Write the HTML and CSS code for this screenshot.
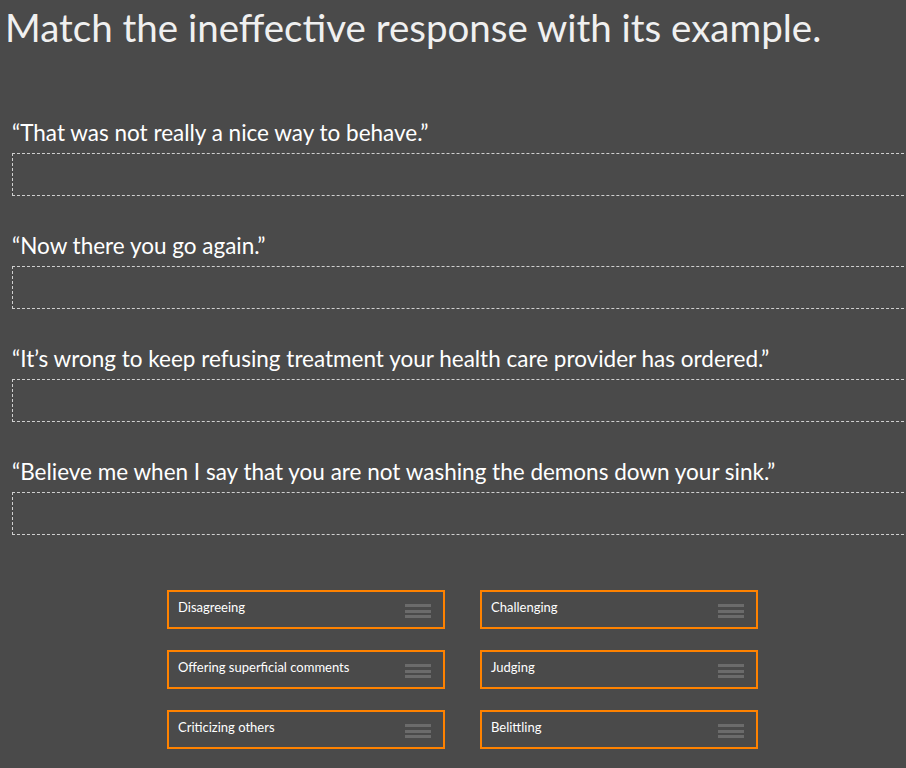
FILE: index.html
```html
<!DOCTYPE html>
<html lang="en">
<head>
<meta charset="utf-8">
<title>Match</title>
<link rel="stylesheet" href="styles.css">
</head>
<body>
<h1 class="title">Match the ineffective response with its example.</h1>
<div class="questions">
  <div class="item">
    <div class="label">“That was not really a nice way to behave.”</div>
    <div class="drop"></div>
  </div>
  <div class="item">
    <div class="label">“Now there you go again.”</div>
    <div class="drop"></div>
  </div>
  <div class="item">
    <div class="label">“It’s wrong to keep refusing treatment your health care provider has ordered.”</div>
    <div class="drop"></div>
  </div>
  <div class="item">
    <div class="label">“Believe me when I say that you are not washing the demons down your sink.”</div>
    <div class="drop"></div>
  </div>
</div>
<div class="cards">
  <div class="card"><span>Disagreeing</span><svg class="grip" width="26" height="14" viewBox="0 0 26 14"><rect y="0" width="26" height="3"/><rect y="6" width="26" height="3"/><rect y="11" width="26" height="3"/></svg></div>
  <div class="card"><span>Challenging</span><svg class="grip" width="26" height="14" viewBox="0 0 26 14"><rect y="0" width="26" height="3"/><rect y="6" width="26" height="3"/><rect y="11" width="26" height="3"/></svg></div>
  <div class="card"><span>Offering superficial comments</span><svg class="grip" width="26" height="14" viewBox="0 0 26 14"><rect y="0" width="26" height="3"/><rect y="6" width="26" height="3"/><rect y="11" width="26" height="3"/></svg></div>
  <div class="card"><span>Judging</span><svg class="grip" width="26" height="14" viewBox="0 0 26 14"><rect y="0" width="26" height="3"/><rect y="6" width="26" height="3"/><rect y="11" width="26" height="3"/></svg></div>
  <div class="card"><span>Criticizing others</span><svg class="grip" width="26" height="14" viewBox="0 0 26 14"><rect y="0" width="26" height="3"/><rect y="6" width="26" height="3"/><rect y="11" width="26" height="3"/></svg></div>
  <div class="card"><span>Belittling</span><svg class="grip" width="26" height="14" viewBox="0 0 26 14"><rect y="0" width="26" height="3"/><rect y="6" width="26" height="3"/><rect y="11" width="26" height="3"/></svg></div>
</div>
</body>
</html>
```
FILE: styles.css
```css
html, body {
  margin: 0;
  padding: 0;
  background: #4a4a4a;
  overflow: hidden;
}
body {
  color: #ffffff;
  font-family: Lato, "Open Sans", sans-serif;
  width: 906px;
  height: 768px;
}
.title {
  margin: 0;
  padding: 4px 0 0 5px;
  font-size: 38.5px;
  font-weight: 400;
  line-height: 46px;
  color: #f0f0f0;
  white-space: nowrap;
}
.questions {
  padding: 70px 0 0 12px;
  display: flex;
  flex-direction: column;
  gap: 37px;
}
.item {
  display: flex;
  flex-direction: column;
  gap: 7px;
}
.label {
  font-size: 22.5px;
  line-height: 26px;
  white-space: nowrap;
}
.drop {
  height: 41px;
  width: 920px;
  border: 1px dashed #d0d0d0;
}
.cards {
  margin: 55px 0 0 167px;
  display: grid;
  grid-template-columns: 278px 278px;
  column-gap: 35px;
  row-gap: 21px;
}
.card {
  box-sizing: border-box;
  height: 39px;
  border: 2px solid #ff8200;
  display: flex;
  align-items: center;
  justify-content: space-between;
  padding: 0 12px 0 9px;
  font-size: 13px;
}
.card span {
  margin-top: -6px;
}
.grip {
  fill: #6b6b6b;
  margin-top: 3px;
}
```
